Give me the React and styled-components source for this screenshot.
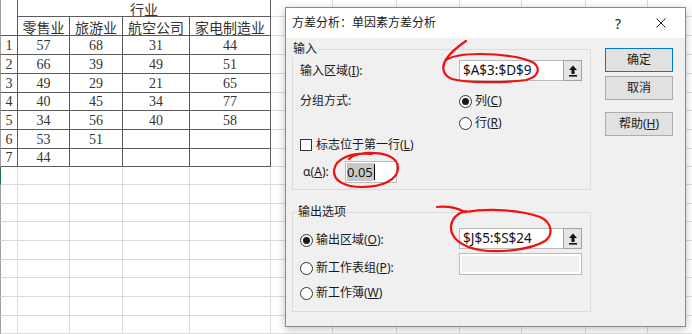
import React from "react";
import styled, { createGlobalStyle } from "styled-components";

const GlobalStyle = createGlobalStyle`
  html, body {
    margin: 0;
    padding: 0;
    background: #fff;
  }
  body {
    width: 692px;
    height: 334px;
    overflow: hidden;
  }
`;

const COLS = [18, 52, 53, 67, 81, 62, 64, 63, 62, 64, 62, 63];
const ROWS = [17, 19, 19, 19, 19, 18, 19, 19, 18, 18, 19, 18, 19, 19, 18, 19, 19, 18];

const headers = ["零售业", "旅游业", "航空公司", "家电制造业"];
const tableRows = [
  ["1", "57", "68", "31", "44"],
  ["2", "66", "39", "49", "51"],
  ["3", "49", "29", "21", "65"],
  ["4", "40", "45", "34", "77"],
  ["5", "34", "56", "40", "58"],
  ["6", "53", "51", "", ""],
  ["7", "44", "", "", ""],
];

const Screen = styled.div`
  position: relative;
  width: 692px;
  height: 334px;
  overflow: hidden;
`;

const Grid = styled.div`
  display: grid;
  grid-template-columns: ${COLS.map((c) => `${c}px`).join(" ")};
  grid-template-rows: ${ROWS.map((r) => `${r}px`).join(" ")};
  font-family: "Liberation Serif", "Noto Sans CJK SC", serif;
  font-size: 14px;
  color: #333;
`;

const Cell = styled.div`
  box-sizing: border-box;
  display: flex;
  align-items: center;
  justify-content: center;
  white-space: nowrap;
  overflow: hidden;
  padding-top: 1px;
  grid-column: span ${(p) => p.$colSpan || 1};
  grid-row: span ${(p) => p.$rowSpan || 1};
  border-right: 1px solid ${(p) => (p.$dark ? "#5c5c5c" : "#dadada")};
  border-bottom: 1px solid ${(p) => (p.$dark ? "#5c5c5c" : "#dadada")};
  border-left: ${(p) =>
    p.$first ? `1px solid ${p.$mark ? "#217346" : "#a0a0a0"}` : "none"};
`;

const Key = styled.span`
  text-decoration: underline;
  text-underline-offset: 1px;
`;

/* dialog */
const Dialog = styled.div`
  position: absolute;
  left: 285px;
  top: 7px;
  width: 401px;
  height: 320px;
  box-sizing: border-box;
  border: 1px solid #8a8a8a;
  background: #f0f0f0;
  box-shadow: 0 2px 8px rgba(0, 0, 0, 0.25);
  display: flex;
  flex-direction: column;
  font-family: "Noto Sans", "Noto Sans CJK SC", sans-serif;
  font-size: 12px;
  color: #1a1a1a;
  z-index: 1;
`;

const TitleBar = styled.div`
  height: 30px;
  flex-shrink: 0;
  background: #fff;
  display: flex;
  align-items: center;
  padding-left: 6px;
`;

const Title = styled.div`
  flex: 1;
  line-height: 16px;
`;

const HelpMark = styled.span`
  width: 10px;
  text-align: center;
  font-size: 14px;
  color: #222;
`;

const CloseIcon = styled.svg`
  margin: 0 19px 0 33px;
`;

const Body = styled.div`
  display: flex;
  align-items: flex-start;
  gap: 14px;
  padding-left: 6px;
`;

const Groups = styled.div`
  width: 299px;
  margin-top: 11px;
  display: flex;
  flex-direction: column;
  gap: 22px;
`;

const Group = styled.div`
  position: relative;
  box-sizing: border-box;
  height: ${(p) => p.$h}px;
  border: 1px solid #dcdcdc;
  padding-left: 7px;
`;

const Legend = styled.span`
  position: absolute;
  top: -9px;
  left: ${(p) => p.$left}px;
  padding: 0 1px;
  background: #f0f0f0;
  line-height: 16px;
`;

const FieldRow = styled.div`
  display: flex;
  align-items: center;
  height: ${(p) => p.$h}px;
  margin-top: ${(p) => p.$mt || 0}px;
`;

const FieldLabel = styled.div`
  width: ${(p) => p.$w}px;
  flex-shrink: 0;
  padding-top: ${(p) => p.$shift || 0}px;
  line-height: 16px;
  display: flex;
  align-items: center;
`;

const Option = styled.span`
  display: inline-flex;
  align-items: center;
  gap: 3px;
  line-height: 16px;
`;

const RadioCircle = styled.span`
  width: 13px;
  height: 13px;
  box-sizing: border-box;
  border: 1px solid #333;
  border-radius: 50%;
  background: #fff;
  display: inline-flex;
  align-items: center;
  justify-content: center;
  &::after {
    content: "";
    display: ${(p) => (p.$checked ? "block" : "none")};
    width: 7px;
    height: 7px;
    border-radius: 50%;
    background: #1a1a1a;
  }
`;

const CheckBox = styled.span`
  width: 12px;
  height: 12px;
  box-sizing: border-box;
  border: 1px solid #333;
  background: #fff;
  margin-right: 1px;
`;

const RangeField = styled.div`
  display: flex;
  width: 123px;
  height: ${(p) => p.$h || 21}px;
  box-sizing: border-box;
  border: 1px solid #bcbcbc;
  background: ${(p) => (p.$disabled ? "#f0f0f0" : "#fff")};
  box-shadow: ${(p) => (p.$disabled ? "inset 0 0 0 2px #fff" : "none")};
`;

const RangeText = styled.div`
  flex: 1;
  padding-left: 3px;
  font-size: 13.5px;
  line-height: 19px;
  color: #111;
`;

const CollapseButton = styled.div`
  width: 19px;
  margin: -1px -1px -1px 0;
  box-sizing: border-box;
  border: 1px solid #a3a3a3;
  background: #e5e5e5;
  display: flex;
  align-items: center;
  justify-content: center;
`;

const AlphaInput = styled.div`
  width: 52px;
  height: 22px;
  box-sizing: border-box;
  border: 1px solid #bcbcbc;
  background: #fff;
  padding: 1px;
  display: flex;
  align-items: center;
`;

const Selected = styled.span`
  background: #c8c8c8;
  font-size: 13px;
  line-height: 18px;
  color: #111;
  padding-right: 1px;
`;

const Caret = styled.span`
  width: 1px;
  height: 16px;
  background: #000;
`;

const Buttons = styled.div`
  width: 68px;
  margin-top: 10px;
  display: flex;
  flex-direction: column;
`;

const Button = styled.div`
  width: 68px;
  height: 24px;
  box-sizing: border-box;
  margin-top: ${(p) => p.$mt || 0}px;
  border: 1px solid ${(p) => (p.$primary ? "#0078d7" : "#adadad")};
  background: #e1e1e1;
  display: flex;
  align-items: center;
  justify-content: center;
  line-height: 16px;
`;

const Marks = styled.svg`
  position: absolute;
  left: 0;
  top: 0;
  pointer-events: none;
  z-index: 2;
`;

const UpArrow = () => (
  <svg width="10" height="12" viewBox="0 0 10 12">
    <polygon points="5,0.5 9,5 6.5,5 6.5,9 3.5,9 3.5,5 1,5" fill="#111" />
    <rect x="1" y="10" width="8" height="1.6" fill="#111" />
  </svg>
);

const Radio = ({ checked, children }) => (
  <Option>
    <RadioCircle $checked={checked} />
    <span>{children}</span>
  </Option>
);

const Check = ({ children }) => (
  <Option>
    <CheckBox />
    <span>{children}</span>
  </Option>
);

const Sheet = () => {
  const cells = [];
  const empties = (prefix) => {
    for (let c = 5; c < COLS.length; c++) cells.push(<Cell key={`${prefix}-${c}`} />);
  };

  cells.push(<Cell key="corner" $dark $first $rowSpan={2} />);
  cells.push(
    <Cell key="title" $dark $colSpan={4}>
      行业
    </Cell>
  );
  empties("r0");
  headers.forEach((h) =>
    cells.push(
      <Cell key={h} $dark>
        {h}
      </Cell>
    )
  );
  empties("r1");
  tableRows.forEach((row, r) => {
    row.forEach((v, c) =>
      cells.push(
        <Cell key={`d${r}-${c}`} $dark $first={c === 0}>
          {v}
        </Cell>
      )
    );
    empties(`d${r}`);
  });
  for (let r = 9; r < ROWS.length; r++) {
    for (let c = 0; c < COLS.length; c++) {
      cells.push(<Cell key={`e${r}-${c}`} $first={c === 0} $mark={r === 9 && c === 0} />);
    }
  }
  return <Grid>{cells}</Grid>;
};

const AnovaDialog = () => (
  <Dialog>
    <TitleBar>
      <Title>方差分析：单因素方差分析</Title>
      <HelpMark>?</HelpMark>
      <CloseIcon width="10" height="10" viewBox="0 0 10 10">
        <path d="M0.5 0.5 L9.5 9.5 M9.5 0.5 L0.5 9.5" stroke="#222" strokeWidth="1" />
      </CloseIcon>
    </TitleBar>
    <Body>
      <Groups>
        <Group $h={141}>
          <Legend $left={-1}>输入</Legend>
          <FieldRow $h={23} $mt={9}>
            <FieldLabel $w={159}>
              <span>
                输入区域(<Key>I</Key>):
              </span>
            </FieldLabel>
            <RangeField>
              <RangeText>$A$3:$D$9</RangeText>
              <CollapseButton>
                <UpArrow />
              </CollapseButton>
            </RangeField>
          </FieldRow>
          <FieldRow $h={22} $mt={8}>
            <FieldLabel $w={159}>分组方式:</FieldLabel>
            <Radio checked>
              列(<Key>C</Key>)
            </Radio>
          </FieldRow>
          <FieldRow $h={22}>
            <FieldLabel $w={159} />
            <Radio>
              行(<Key>R</Key>)
            </Radio>
          </FieldRow>
          <FieldRow $h={22}>
            <Check>
              标志位于第一行(<Key>L</Key>)
            </Check>
          </FieldRow>
          <FieldRow $h={23} $mt={4}>
            <FieldLabel $w={45}>
              <span>
                &nbsp;α(<Key>A</Key>):
              </span>
            </FieldLabel>
            <AlphaInput>
              <Selected>0.05</Selected>
              <Caret />
            </AlphaInput>
          </FieldRow>
        </Group>
        <Group $h={100}>
          <Legend $left={4}>输出选项</Legend>
          <FieldRow $h={23} $mt={14}>
            <FieldLabel $w={159} $shift={3}>
              <Radio checked>
                输出区域(<Key>O</Key>):
              </Radio>
            </FieldLabel>
            <RangeField>
              <RangeText>$J$5:$S$24</RangeText>
              <CollapseButton>
                <UpArrow />
              </CollapseButton>
            </RangeField>
          </FieldRow>
          <FieldRow $h={24} $mt={2}>
            <FieldLabel $w={159} $shift={8}>
              <Radio>
                新工作表组(<Key>P</Key>):
              </Radio>
            </FieldLabel>
            <RangeField $h={22} $disabled />
          </FieldRow>
          <FieldRow $h={20} $mt={7}>
            <Radio>
              新工作薄(<Key>W</Key>)
            </Radio>
          </FieldRow>
        </Group>
      </Groups>
      <Buttons>
        <Button $primary>确定</Button>
        <Button $mt={4}>取消</Button>
        <Button $mt={12}>
          <span>
            帮助(<Key>H</Key>)
          </span>
        </Button>
      </Buttons>
    </Body>
  </Dialog>
);

export default function App() {
  return (
    <Screen>
      <GlobalStyle />
      <Sheet />
      <AnovaDialog />
      <Marks width="692" height="334" viewBox="0 0 692 334">
        <g fill="none" stroke="#f01010" strokeWidth="2.2" strokeLinecap="round">
          <path d="M466,41 C460,45 452,51 447,58 C441,66 442,75 452,79 C466,83 505,83 526,80 C538,77 541,69 534,63 C524,57 500,54 480,54 C465,54 452,56 446,60" />
          <path d="M372,154 C352,152 336,158 334,170 C333,181 345,187 362,187 C382,187 398,180 398,168 C398,157 385,152 365,153 C358,154 352,156 349,159" />
          <path d="M437,207 C447,206 457,208 465,212 C490,208 520,210 540,217 C553,223 553,235 545,241 C530,250 500,253 480,250 C462,247 450,238 451,226 C452,218 458,213 466,211" />
        </g>
      </Marks>
    </Screen>
  );
}
